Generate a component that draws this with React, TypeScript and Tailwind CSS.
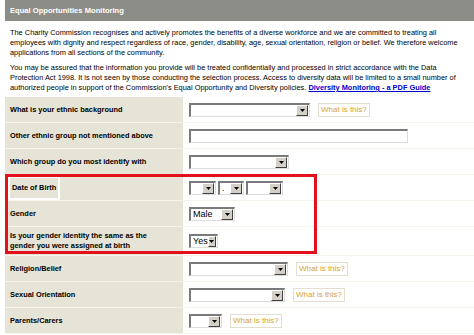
import React from 'react';

const Arrow = () => (
  <span className="flex h-[11px] w-[12px] items-center justify-center bg-[#d4d0c8] border border-t-white border-l-white border-b-[#404040] border-r-[#404040]">
    <svg width="5" height="3" viewBox="0 0 5 3">
      <path d="M0 0h5L2.5 3z" fill="#000" />
    </svg>
  </span>
);

const Select = ({ width, value }: { width: number; value?: string }) => (
  <span
    className="flex h-[14px] items-center justify-between bg-white border-t-2 border-l-2 border-b border-r border-t-[#7a7a7a] border-l-[#7a7a7a] border-b-[#dcdcdc] border-r-[#dcdcdc] pr-[1px]"
    style={{ width }}
  >
    <span className="pl-[2px] text-[9px] leading-none text-black">{value}</span>
    <Arrow />
  </span>
);

const Help = () => (
  <span className="ml-2 border border-[#e2dfd2] px-[2px] py-[1px] text-[8px] leading-[10px] text-[#d4a23a]">What is this?</span>
);

const Row = ({
  label,
  tall,
  children,
}: {
  label: React.ReactNode;
  tall?: boolean;
  children?: React.ReactNode;
}) => (
  <div className={`flex border-b border-[#f4f3ec] ${tall ? 'h-[29px]' : 'h-[26px]'}`}>
    <div className="flex w-[178px] items-center bg-[#e6e4d6] px-[5px] font-bold leading-[10px]">{label}</div>
    <div className="flex flex-1 items-center pl-[6px]">{children}</div>
  </div>
);

export default function App() {
  return (
    <div className="relative h-[335px] w-[474px] overflow-hidden bg-white pl-[5px] text-[7.4px] text-black [font-family:'Liberation_Sans',Arial,sans-serif]">
      <div className="flex h-[21px] items-center bg-[#8d8d87] pl-[5px] text-[7.6px] font-bold text-white">
        Equal Opportunities Monitoring
      </div>
      <div className="px-[5px] pt-[7px] leading-[10px]">
        <p>
          The Charity Commission recognises and actively promotes the benefits of a diverse workforce and we are committed to treating all
          employees with dignity and respect regardless of race, gender, disability, age, sexual orientation, religion or belief. We therefore welcome
          applications from all sections of the community.
        </p>
        <p className="mt-[5px]">
          You may be assured that the information you provide will be treated confidentially and processed in strict accordance with the Data
          Protection Act 1998. It is not seen by those conducting the selection process. Access to diversity data will be limited to a small number of
          authorized people in support of the Commission's Equal Opportunity and Diversity policies.{' '}
          <span className="font-bold text-[#0000cc] underline">Diversity Monitoring - a PDF Guide</span>
        </p>
      </div>
      <div className="mt-[4px]">
        <Row label="What is your ethnic background">
          <Select width={121} />
          <Help />
        </Row>
        <Row label="Other ethnic group not mentioned above">
          <span className="h-[14px] w-[219px] bg-white border-t-2 border-l-2 border-b border-r border-t-[#7a7a7a] border-l-[#7a7a7a] border-b-[#dcdcdc] border-r-[#dcdcdc]" />
        </Row>
        <Row label="Which group do you most identify with">
          <Select width={100} />
        </Row>
        <Row label={<span className="-ml-[2px] flex h-[24px] w-[52px] items-center border-2 border-white pl-[2px]">Date of Birth</span>}>
          <div className="flex gap-[2px]">
            <Select width={27} />
            <Select width={26} value="." />
            <Select width={37} />
          </div>
        </Row>
        <Row label="Gender">
          <Select width={46} value="Male" />
        </Row>
        <Row tall label={<span>Is your gender identity the same as the<br />gender you were assigned at birth</span>}>
          <Select width={29} value="Yes" />
        </Row>
        <Row label="Religion/Belief">
          <Select width={99} />
          <Help />
        </Row>
        <Row label="Sexual Orientation">
          <Select width={96} />
          <Help />
        </Row>
        <Row label="Parents/Carers">
          <Select width={33} />
          <Help />
        </Row>
      </div>
      <div className="absolute left-[5px] top-[174px] h-[80px] w-[312px] border-[3px] border-[#e3111b]" />
    </div>
  );
}
